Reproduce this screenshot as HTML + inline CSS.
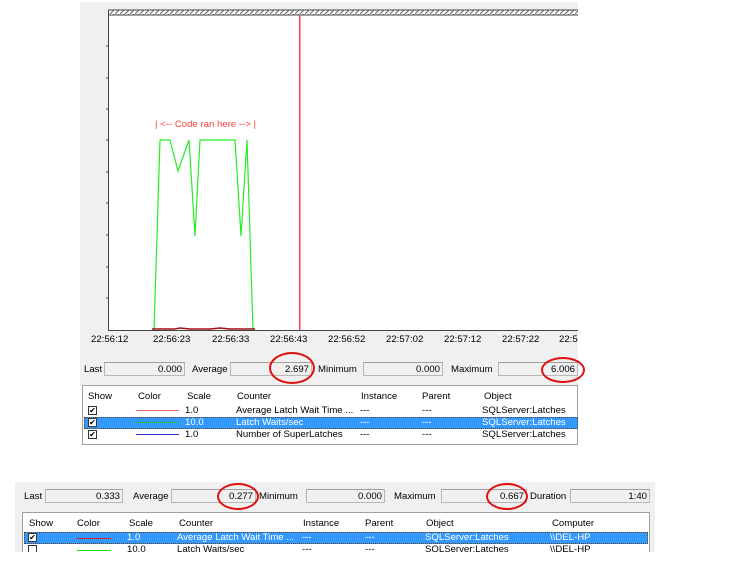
<!DOCTYPE html>
<html><head><meta charset="utf-8"><style>
*{margin:0;padding:0;box-sizing:border-box}
body{width:740px;height:572px;background:#fff;position:relative;overflow:hidden;font-family:"Liberation Sans",sans-serif;font-size:9.6px;color:#000}
.a{position:absolute;white-space:nowrap}
.box{position:absolute;height:14px;border:1px solid #b8b8b8;border-top-color:#a0a0a0;background:#f0f0f0;text-align:right;padding-right:2px;line-height:13px}
.ell{position:absolute;border:2px solid #e01010;border-radius:50%}
.sel{position:absolute;background:#3399ff;border:1px dotted #604020}
.cb{position:absolute;width:9px;height:9px;border:1px solid #333;background:#fff;font-size:8px;line-height:7px;text-align:center}
</style></head><body>
<div class="a" style="left:80px;top:2px;width:498px;height:384px;background:#f0f0f0"></div>
<svg class="a" style="left:80px;top:2px" width="498" height="350">
<defs><pattern id="h" width="5" height="4" patternUnits="userSpaceOnUse"><rect width="5" height="4" fill="#fff"/><path d="M0 4L4 0" stroke="#666" stroke-width="1"/></pattern></defs>
<rect x="28" y="8" width="470" height="320" fill="#fff"/>
<rect x="28" y="8" width="470" height="5" fill="url(#h)"/>
<line x1="28" y1="8" x2="498" y2="8" stroke="#444"/>
<line x1="28" y1="13" x2="498" y2="13" stroke="#444"/>
<line x1="28.5" y1="8" x2="28.5" y2="329" stroke="#444"/>
<line x1="28" y1="328.5" x2="498" y2="328.5" stroke="#444"/>
<g stroke="#444">
<line x1="26" y1="44" x2="28" y2="44"/><line x1="26" y1="76" x2="28" y2="76"/><line x1="26" y1="107" x2="28" y2="107"/><line x1="26" y1="138" x2="28" y2="138"/><line x1="26" y1="170" x2="28" y2="170"/><line x1="26" y1="201" x2="28" y2="201"/><line x1="26" y1="233" x2="28" y2="233"/><line x1="26" y1="265" x2="28" y2="265"/><line x1="26" y1="296" x2="28" y2="296"/>
</g>
<polyline fill="none" stroke="#22ee22" stroke-width="1.2" points="74,328 80,138 90,138 98,169 109,138 115,234 120,138 155,138 161,234 167,138 173,328"/>
<polyline fill="none" stroke="#a01010" stroke-width="1.5" points="72,327 95,327 100,326 110,327 130,327 140,326 150,327 175,327"/>
<rect x="219" y="13" width="1.5" height="315" fill="#ff4040"/>
<text x="75" y="125" fill="#ff4040" font-size="9.6" font-family="Liberation Sans">| &lt;-- Code ran here --&gt; |</text>
</svg>
<div class="a" style="left:91px;top:334px">22:56:12</div>
<div class="a" style="left:153px;top:334px">22:56:23</div>
<div class="a" style="left:212px;top:334px">22:56:33</div>
<div class="a" style="left:270px;top:334px">22:56:43</div>
<div class="a" style="left:328px;top:334px">22:56:52</div>
<div class="a" style="left:386px;top:334px">22:57:02</div>
<div class="a" style="left:444px;top:334px">22:57:12</div>
<div class="a" style="left:502px;top:334px">22:57:22</div>
<div class="a" style="left:559px;top:334px">22:5</div>

<div class="a" style="left:84px;top:364px">Last</div>
<div class="box" style="left:104px;top:362px;width:81px">0.000</div>
<div class="a" style="left:192px;top:364px">Average</div>
<div class="box" style="left:230px;top:362px;width:82px">2.697</div>
<div class="a" style="left:318px;top:364px">Minimum</div>
<div class="box" style="left:363px;top:362px;width:80px">0.000</div>
<div class="a" style="left:451px;top:364px">Maximum</div>
<div class="box" style="left:498px;top:362px;width:80px">6.006</div>
<div class="ell" style="left:269px;top:352px;width:46px;height:32px"></div>
<div class="ell" style="left:541px;top:357px;width:44px;height:26px"></div>

<div class="a" style="left:82px;top:385px;width:496px;height:60px;background:#fff;border:1px solid #a0a0a0"></div>
<div class="a" style="left:88px;top:391px">Show</div>
<div class="a" style="left:138px;top:391px">Color</div>
<div class="a" style="left:187px;top:391px">Scale</div>
<div class="a" style="left:237px;top:391px">Counter</div>
<div class="a" style="left:361px;top:391px">Instance</div>
<div class="a" style="left:422px;top:391px">Parent</div>
<div class="a" style="left:484px;top:391px">Object</div>
<div class="sel" style="left:84px;top:417px;width:494px;height:12px"></div>
<div class="cb" style="left:88px;top:406px">✔</div><div class="cb" style="left:88px;top:418px">✔</div><div class="cb" style="left:88px;top:430px">✔</div>
<div class="a" style="left:136px;top:410px;width:43px;height:1px;background:#f07070"></div>
<div class="a" style="left:136px;top:422px;width:43px;height:1px;background:#20c040"></div>
<div class="a" style="left:136px;top:434px;width:43px;height:1px;background:#3030e0"></div>
<div class="a" style="left:185px;top:405px">1.0</div><div class="a" style="left:236px;top:405px">Average Latch Wait Time ...</div><div class="a" style="left:360px;top:405px">---</div><div class="a" style="left:422px;top:405px">---</div><div class="a" style="left:482px;top:405px">SQLServer:Latches</div>
<div class="a" style="left:185px;top:417px;color:#fff">10.0</div><div class="a" style="left:236px;top:417px;color:#fff">Latch Waits/sec</div><div class="a" style="left:360px;top:417px;color:#fff">---</div><div class="a" style="left:422px;top:417px;color:#fff">---</div><div class="a" style="left:482px;top:417px;color:#fff">SQLServer:Latches</div>
<div class="a" style="left:185px;top:429px">1.0</div><div class="a" style="left:236px;top:429px">Number of SuperLatches</div><div class="a" style="left:360px;top:429px">---</div><div class="a" style="left:422px;top:429px">---</div><div class="a" style="left:482px;top:429px">SQLServer:Latches</div>

<div class="a" style="left:15px;top:482px;width:640px;height:70px;background:#f0f0f0"></div>
<div class="a" style="left:24px;top:491px">Last</div>
<div class="box" style="left:45px;top:489px;width:78px">0.333</div>
<div class="a" style="left:133px;top:491px">Average</div>
<div class="box" style="left:171px;top:489px;width:85px">0.277</div>
<div class="a" style="left:259px;top:491px">Minimum</div>
<div class="box" style="left:306px;top:489px;width:79px">0.000</div>
<div class="a" style="left:394px;top:491px">Maximum</div>
<div class="box" style="left:441px;top:489px;width:86px">0.667</div>
<div class="a" style="left:530px;top:491px">Duration</div>
<div class="box" style="left:570px;top:489px;width:80px">1:40</div>
<div class="ell" style="left:217px;top:483px;width:42px;height:27px"></div>
<div class="ell" style="left:486px;top:483px;width:42px;height:27px"></div>
<div class="a" style="left:22px;top:512px;width:628px;height:40px;background:#fff;border:1px solid #a0a0a0;border-bottom:none"></div>
<div class="a" style="left:29px;top:518px">Show</div>
<div class="a" style="left:77px;top:518px">Color</div>
<div class="a" style="left:129px;top:518px">Scale</div>
<div class="a" style="left:179px;top:518px">Counter</div>
<div class="a" style="left:303px;top:518px">Instance</div>
<div class="a" style="left:365px;top:518px">Parent</div>
<div class="a" style="left:426px;top:518px">Object</div>
<div class="a" style="left:552px;top:518px">Computer</div>
<div class="sel" style="left:24px;top:532px;width:624px;height:12px"></div>
<div class="cb" style="left:28px;top:533px">✔</div>
<div class="cb" style="left:28px;top:545px"></div>
<div class="a" style="left:77px;top:538px;width:34px;height:1px;background:#e02020"></div>
<div class="a" style="left:77px;top:550px;width:34px;height:1px;background:#20e020"></div>
<div class="a" style="left:127px;top:532px;color:#fff">1.0</div><div class="a" style="left:177px;top:532px;color:#fff">Average Latch Wait Time ...</div><div class="a" style="left:302px;top:532px;color:#fff">---</div><div class="a" style="left:365px;top:532px;color:#fff">---</div><div class="a" style="left:425px;top:532px;color:#fff">SQLServer:Latches</div><div class="a" style="left:550px;top:532px;color:#fff">\\DEL-HP</div>
<div class="a" style="left:127px;top:544px">10.0</div><div class="a" style="left:177px;top:544px">Latch Waits/sec</div><div class="a" style="left:302px;top:544px">---</div><div class="a" style="left:365px;top:544px">---</div><div class="a" style="left:425px;top:544px">SQLServer:Latches</div><div class="a" style="left:550px;top:544px">\\DEL-HP</div>
<div class="a" style="left:0;top:552px;width:740px;height:20px;background:#fff"></div>
</body></html>
